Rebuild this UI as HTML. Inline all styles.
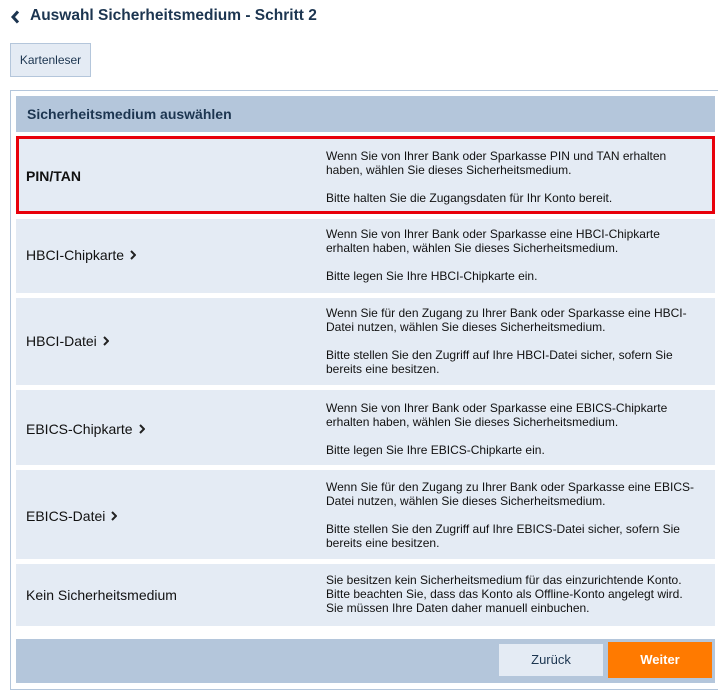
<!DOCTYPE html>
<html><head><meta charset="utf-8"><style>
*{margin:0;padding:0;box-sizing:border-box}
body{width:718px;height:685px;background:#fff;font-family:"Liberation Sans",Arial,sans-serif;position:relative;overflow:hidden;color:#111}
.a{position:absolute}
h1{position:absolute;left:30px;top:7px;font-size:15.5px;font-weight:bold;color:#1c3550}
.row{position:absolute;left:16px;width:699px;background:#e4ebf4}
.lbl{position:absolute;left:10px;font-size:14px;color:#111}
.txt{position:absolute;left:310px;font-size:12px;line-height:14px;color:#111}
.ch{display:inline-block;margin-left:6px;vertical-align:middle;position:relative;top:-1px}
</style></head><body>
<svg class="a" style="left:10px;top:10px" width="10" height="14"><path d="M8 1.5 L3 7 L8 12.5" fill="none" stroke="#1c3550" stroke-width="3"/></svg>
<h1>Auswahl Sicherheitsmedium - Schritt 2</h1>
<div class="a" style="left:10px;top:43px;width:81px;height:34px;background:#e4ebf4;border:1px solid #b4c6db;font-size:12px;line-height:32px;text-align:center;color:#1c3550">Kartenleser</div>
<div class="a" style="left:10px;top:90px;width:712px;height:600px;border:1px solid #b4c6db"></div>
<div class="a" style="left:16px;top:96px;width:699px;height:36px;background:#b4c6db;font-size:14px;font-weight:bold;color:#1c3550;line-height:36px;padding-left:11px">Sicherheitsmedium auswählen</div>

<div class="row" style="top:136px;height:78px;border:3px solid #e8000b">
<div class="lbl" style="left:7px;top:29px;font-weight:bold">PIN/TAN</div>
<div class="txt" style="left:307px;top:10px">Wenn Sie von Ihrer Bank oder Sparkasse PIN und TAN erhalten<br>haben, wählen Sie dieses Sicherheitsmedium.<br><br>Bitte halten Sie die Zugangsdaten für Ihr Konto bereit.</div></div>

<div class="row" style="top:219px;height:74px">
<div class="lbl" style="top:28px">HBCI-Chipkarte<svg class="ch" width="6" height="10"><path d="M1 1 L5 5 L1 9" fill="none" stroke="#222" stroke-width="2"/></svg></div>
<div class="txt" style="top:8px">Wenn Sie von Ihrer Bank oder Sparkasse eine HBCI-Chipkarte<br>erhalten haben, wählen Sie dieses Sicherheitsmedium.<br><br>Bitte legen Sie Ihre HBCI-Chipkarte ein.</div></div>

<div class="row" style="top:298px;height:87px">
<div class="lbl" style="top:35px">HBCI-Datei<svg class="ch" width="6" height="10"><path d="M1 1 L5 5 L1 9" fill="none" stroke="#222" stroke-width="2"/></svg></div>
<div class="txt" style="top:8px">Wenn Sie für den Zugang zu Ihrer Bank oder Sparkasse eine HBCI-<br>Datei nutzen, wählen Sie dieses Sicherheitsmedium.<br><br>Bitte stellen Sie den Zugriff auf Ihre HBCI-Datei sicher, sofern Sie<br>bereits eine besitzen.</div></div>

<div class="row" style="top:390px;height:75px">
<div class="lbl" style="top:31px">EBICS-Chipkarte<svg class="ch" width="6" height="10"><path d="M1 1 L5 5 L1 9" fill="none" stroke="#222" stroke-width="2"/></svg></div>
<div class="txt" style="top:11px">Wenn Sie von Ihrer Bank oder Sparkasse eine EBICS-Chipkarte<br>erhalten haben, wählen Sie dieses Sicherheitsmedium.<br><br>Bitte legen Sie Ihre EBICS-Chipkarte ein.</div></div>

<div class="row" style="top:470px;height:89px">
<div class="lbl" style="top:38px">EBICS-Datei<svg class="ch" width="6" height="10"><path d="M1 1 L5 5 L1 9" fill="none" stroke="#222" stroke-width="2"/></svg></div>
<div class="txt" style="top:10px">Wenn Sie für den Zugang zu Ihrer Bank oder Sparkasse eine EBICS-<br>Datei nutzen, wählen Sie dieses Sicherheitsmedium.<br><br>Bitte stellen Sie den Zugriff auf Ihre EBICS-Datei sicher, sofern Sie<br>bereits eine besitzen.</div></div>

<div class="row" style="top:564px;height:62px">
<div class="lbl" style="top:23px">Kein Sicherheitsmedium</div>
<div class="txt" style="top:9px">Sie besitzen kein Sicherheitsmedium für das einzurichtende Konto.<br>Bitte beachten Sie, dass das Konto als Offline-Konto angelegt wird.<br>Sie müssen Ihre Daten daher manuell einbuchen.</div></div>

<div class="a" style="left:16px;top:639px;width:699px;height:44px;background:#b4c6db"></div>
<div class="a" style="left:499px;top:644px;width:104px;height:32px;background:#e4ebf4;font-size:13px;line-height:32px;text-align:center;color:#1c3550">Zurück</div>
<div class="a" style="left:608px;top:642px;width:104px;height:36px;background:#ff7a00;font-size:13px;font-weight:bold;line-height:36px;text-align:center;color:#fff">Weiter</div>
</body></html>
